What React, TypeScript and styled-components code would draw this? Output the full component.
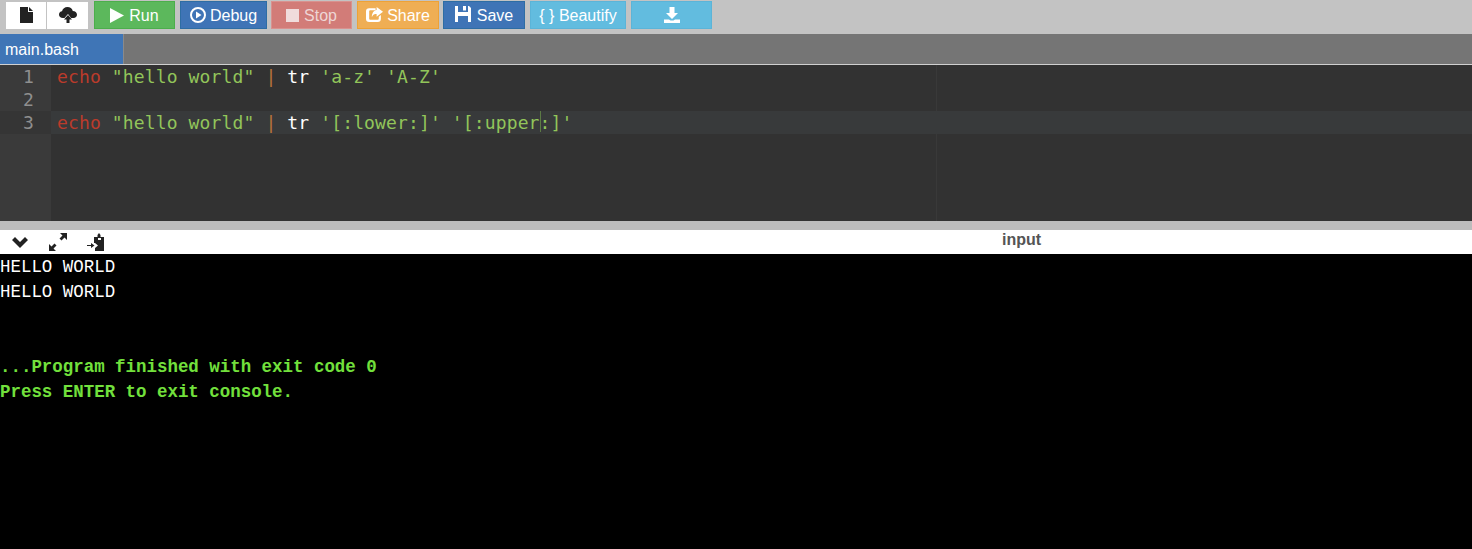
import * as React from 'react';
import styled, {createGlobalStyle} from 'styled-components';

const GlobalStyle = createGlobalStyle`
    html, body {
        margin: 0;
        padding: 0;
        height: 100%;
        background: #000;
        overflow: hidden;
    }

    #root {
        height: 100%;
    }
`;

const Page = styled.div`
    display: flex;
    flex-direction: column;
    height: 549px;
    font-family: "Liberation Sans", Arial, sans-serif;
`;

const Toolbar = styled.div`
    display: flex;
    align-items: flex-start;
    box-sizing: border-box;
    height: 34px;
    padding: 1px 0 0 6px;
    background: #c3c3c3;
`;

const FileButton = styled.div<{$width: number; $left: number}>`
    display: flex;
    align-items: center;
    justify-content: center;
    box-sizing: border-box;
    width: ${p => p.$width}px;
    height: 27px;
    margin: 1px 0 0 ${p => p.$left}px;
    padding-bottom: 2px;
    background: #fff;
`;

const ToolButton = styled.div<{$color: string; $border: string; $width: number; $left: number}>`
    display: flex;
    align-items: center;
    justify-content: center;
    gap: 5px;
    box-sizing: border-box;
    width: ${p => p.$width}px;
    height: 28px;
    margin-left: ${p => p.$left}px;
    padding-top: 1px;
    background: ${p => p.$color};
    border: 1px solid ${p => p.$border};
    color: #fff;
    font-size: 16px;
    white-space: nowrap;
`;

const StopLabel = styled.span`
    color: #eed6d5;
`;

const RaisedIcon = styled.span`
    display: flex;
    margin: -3px 1px 0 0;
`;

const LiftedIcon = styled.span`
    display: flex;
    margin: -2px -1px 0 0;
`;

const TabBar = styled.div`
    display: flex;
    box-sizing: border-box;
    height: 31px;
    background: #757575;
    border-bottom: 1px solid #d0d0d0;
`;

const Tab = styled.div`
    box-sizing: border-box;
    width: 124px;
    padding: 7px 0 0 5px;
    background: #3f75b6;
    border-right: 1px solid #8a8a8a;
    color: #fff;
    font-size: 16px;
`;

const Editor = styled.div`
    position: relative;
    display: flex;
    height: 156px;
    background: #323232;
    font-family: "DejaVu Sans Mono", monospace;
    font-size: 18px;
    line-height: 23px;
    letter-spacing: 0.13px;
`;

const PrintMargin = styled.div`
    position: absolute;
    top: 0;
    bottom: 0;
    left: 936px;
    width: 1px;
    background: #393939;
`;

const Gutter = styled.div`
    width: 51px;
    flex: none;
    background: #3a3a3a;
    color: #8f8f8f;
`;

const GutterCell = styled.div<{$active?: boolean}>`
    box-sizing: border-box;
    height: 23px;
    padding-right: 17px;
    text-align: right;
    background: ${p => (p.$active ? '#353535' : 'transparent')};
`;

const Lines = styled.div`
    flex: 1;
    position: relative;
    z-index: 1;
`;

const CodeLine = styled.div<{$active?: boolean}>`
    height: 23px;
    padding-left: 6px;
    white-space: pre;
    background: ${p => (p.$active ? '#383a3b' : 'transparent')};
`;

const Token = styled.span<{$kind: 'keyword' | 'string' | 'pipe' | 'plain'}>`
    color: ${p => ({keyword: '#bb3b2b', string: '#92c55a', pipe: '#b8733a', plain: '#fff'}[p.$kind])};
`;

const Caret = styled.span`
    display: inline-block;
    width: 1px;
    height: 21px;
    margin-right: -1px;
    vertical-align: top;
    background: #5c7a45;
`;

const Splitter = styled.div`
    height: 9px;
    background: #bcbcbc;
`;

const OutputHeader = styled.div`
    position: relative;
    display: flex;
    align-items: center;
    height: 24px;
    background: #fff;
`;

const OutputIcon = styled.div<{$width: number}>`
    display: flex;
    justify-content: center;
    width: ${p => p.$width}px;
    color: #222;
`;

const InputLabel = styled.div`
    position: absolute;
    left: 1002px;
    top: 1px;
    color: #555;
    font-size: 16px;
    font-weight: bold;
    line-height: 18px;
`;

const Console = styled.div`
    flex: 1;
    padding-top: 1px;
    background: #000;
    color: #fff;
    font-family: "Liberation Mono", "Courier New", monospace;
    font-size: 17.45px;
    line-height: 25px;
`;

const ConsoleLine = styled.div<{$status?: boolean}>`
    height: 25px;
    white-space: pre;
    color: ${p => (p.$status ? '#72e03c' : '#fff')};
    font-weight: ${p => (p.$status ? 'bold' : 'normal')};
`;

const Icon = ({size = 16, children}: {size?: number; children: React.ReactNode}) => (
    <svg width={size} height={size} viewBox='0 0 16 16' fill='currentColor'>{children}</svg>
);

export default function App() {
    return (
        <Page>
            <GlobalStyle />
            <Toolbar>
                <FileButton $width={40} $left={0}>
                    <svg width={13} height={16} viewBox='0 0 13 16' fill='#222'>
                        <path d='M0 0h8v5h5v11H0z' />
                        <path d='M9 0l4 4H9z' />
                    </svg>
                </FileButton>
                <FileButton $width={41} $left={1}>
                    <svg width={18} height={16} viewBox='0 0 18 16' fill='#222'>
                        <path d='M4 11C1.500 11 0 9.500 0 7.500 0 5.700 1.300 4.300 3 4.200 3.600 1.800 5.700 0 8.500 0c2.600 0 4.700 1.600 5.300 4 2.300 0 4.200 1.600 4.200 3.700 0 1.900-1.500 3.300-3.500 3.300h-2.500L9 7 5.500 11z' />
                        <path d='M9 8l4 4.500h-2.500V16h-3v-3.500H5z' />
                    </svg>
                </FileButton>
                <ToolButton $color='#5cb85c' $border='#4cae4c' $width={81} $left={6}>
                    <svg width={14} height={15} viewBox='0 0 14 15' fill='#fff'><path d='M0 0l14 7.500L0 15z' /></svg>
                    Run
                </ToolButton>
                <ToolButton $color='#3f74b6' $border='#2e6da4' $width={87} $left={5}>
                    <LiftedIcon>
                        <Icon>
                            <path fillRule='evenodd' d='M8 0a8 8 0 1 1 0 16A8 8 0 0 1 8 0zm0 2a6 6 0 1 0 0 12A6 6 0 0 0 8 2z' />
                            <path d='M6 4.500l5.500 3.500L6 11.500z' />
                        </Icon>
                    </LiftedIcon>
                    Debug
                </ToolButton>
                <ToolButton $color='#d27c78' $border='#d9928f' $width={81} $left={4}>
                    <svg width={13} height={13} viewBox='0 0 13 13' fill='#f0dcdc'><rect width='13' height='13' /></svg>
                    <StopLabel>Stop</StopLabel>
                </ToolButton>
                <ToolButton $color='#efae54' $border='#eea236' $width={82} $left={5}>
                    <LiftedIcon>
                        <Icon size={17}>
                            <path d='M3 2h6v2H4a1 1 0 0 0-1 1v7a1 1 0 0 0 1 1h7a1 1 0 0 0 1-1v-2l2-1.500V12a3 3 0 0 1-3 3H3a3 3 0 0 1-3-3V5a3 3 0 0 1 3-3z' />
                            <path d='M10 1l6 4.500L10 10V7.500C8 7.500 6.500 8 5.500 10.500 5.500 7 7 4 10 3.700z' />
                        </Icon>
                    </LiftedIcon>
                    Share
                </ToolButton>
                <ToolButton $color='#3f74b6' $border='#2e6da4' $width={82} $left={4}>
                    <RaisedIcon>
                        <Icon>
                            <path fillRule='evenodd' d='M0 0h3v6h10V0h1l2 2v14H0zM3 10v6h10v-6z' />
                            <path d='M8 0h3v4.500H8z' />
                        </Icon>
                    </RaisedIcon>
                    Save
                </ToolButton>
                <ToolButton $color='#62bcdf' $border='#5bb4d8' $width={96} $left={5}>
                    {'{ } Beautify'}
                </ToolButton>
                <ToolButton $color='#62bcdf' $border='#5bb4d8' $width={81} $left={5}>
                    <LiftedIcon>
                        <Icon>
                            <path d='M5.500 0h5v6H14l-6 6-6-6h3.500z' />
                            <path d='M0 12.500h5l1.500 1h3l1.500-1h5V16H0z' />
                        </Icon>
                    </LiftedIcon>
                </ToolButton>
            </Toolbar>
            <TabBar>
                <Tab>main.bash</Tab>
            </TabBar>
            <Editor>
                <PrintMargin />
                <Gutter>
                    <GutterCell>1</GutterCell>
                    <GutterCell>2</GutterCell>
                    <GutterCell $active>3</GutterCell>
                </Gutter>
                <Lines>
                    <CodeLine>
                        <Token $kind='keyword'>echo</Token>{' '}
                        <Token $kind='string'>"hello world"</Token>{' '}
                        <Token $kind='pipe'>|</Token>{' '}
                        <Token $kind='plain'>tr</Token>{' '}
                        <Token $kind='string'>'a-z'</Token>{' '}
                        <Token $kind='string'>'A-Z'</Token>
                    </CodeLine>
                    <CodeLine />
                    <CodeLine $active>
                        <Token $kind='keyword'>echo</Token>{' '}
                        <Token $kind='string'>"hello world"</Token>{' '}
                        <Token $kind='pipe'>|</Token>{' '}
                        <Token $kind='plain'>tr</Token>{' '}
                        <Token $kind='string'>'[:lower:]'</Token>{' '}
                        <Token $kind='string'>'[:upper<Caret />:]'</Token>
                    </CodeLine>
                </Lines>
            </Editor>
            <Splitter />
            <OutputHeader>
                <OutputIcon $width={39}>
                    <svg width={16} height={11} viewBox='0 0 16 11' fill='#222'>
                        <path d='M0 3l3-3 5 5 5-5 3 3-8 8z' />
                    </svg>
                </OutputIcon>
                <OutputIcon $width={38}>
                    <svg width={20} height={20} viewBox='0 0 20 20' fill='#222'>
                        <path d='M12 1h7v7l-2.500-2.500-3 3-2-2 3-3z' />
                        <path d='M1 19v-7l2.500 2.500 3-3 2 2-3 3L8 19z' />
                    </svg>
                </OutputIcon>
                <OutputIcon $width={38}>
                    <svg width={18} height={18} viewBox='0 0 18 18' fill='#222'>
                        <path fillRule='evenodd' d='M7 4h3.500V2l1.500-2 1.500 2v2H17v14H8v-3l3-2.500L8 10H7zM11 5v2h3V5z' />
                        <path d='M0 12h4v-2l3.500 2.500L4 15v-2H0z' />
                    </svg>
                </OutputIcon>
                <InputLabel>input</InputLabel>
            </OutputHeader>
            <Console>
                <ConsoleLine>HELLO WORLD</ConsoleLine>
                <ConsoleLine>HELLO WORLD</ConsoleLine>
                <ConsoleLine />
                <ConsoleLine />
                <ConsoleLine $status>...Program finished with exit code 0</ConsoleLine>
                <ConsoleLine $status>Press ENTER to exit console.</ConsoleLine>
            </Console>
        </Page>
    );
}
